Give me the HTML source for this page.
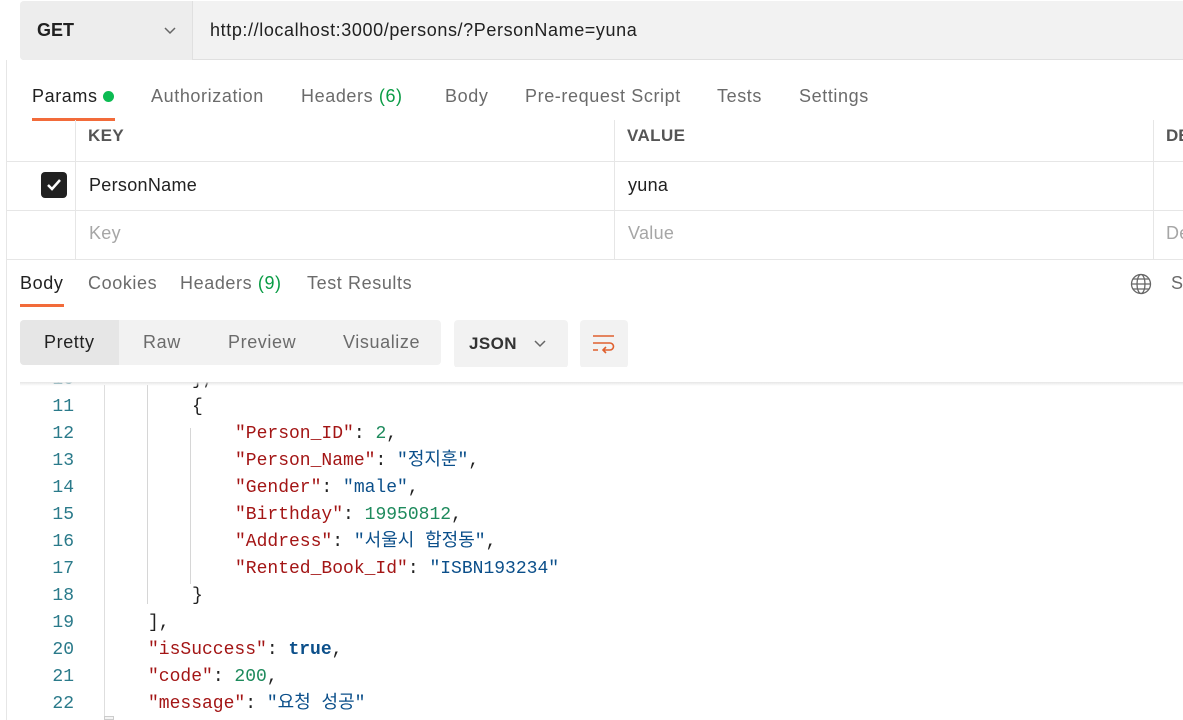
<!DOCTYPE html>
<html><head><meta charset="utf-8"><style>
*{margin:0;padding:0;box-sizing:border-box}
body{width:1183px;height:720px;overflow:hidden;background:#fff;font-family:"Liberation Sans","Noto Sans CJK KR",sans-serif;color:#212121;position:relative}
.a{position:absolute;white-space:nowrap}
.tab{font-size:18px;color:#6b6b6b;letter-spacing:.6px}
.t17{font-size:18px;letter-spacing:.3px}
.code{font-family:"Liberation Mono","Noto Sans CJK KR",monospace;font-size:18px;line-height:22px;height:22px}
.ln{position:absolute;left:20px;width:54px;text-align:right;color:#2a7a8a;font-family:"Liberation Mono",monospace;font-size:18px;line-height:22px}
.k{color:#a31515}.s{color:#0b4f8a}.n{color:#1d8a5c}.b{color:#0b4f8a;font-weight:bold}.p{color:#212121}
</style></head><body>
<div class="a" style="left:6px;top:60px;width:1px;height:660px;background:#e6e6e6"></div>
<div class="a" style="left:20px;top:1px;width:1163px;height:59px;background:#f2f2f2;border-bottom:1px solid #e0e0e0;border-radius:4px 0 0 4px"></div>
<div class="a" style="left:20px;top:1px;width:173px;height:59px;background:#ededed;border-right:1px solid #e0e0e0;border-radius:4px 0 0 4px"></div>
<div class="a" style="left:37px;top:20px;font-size:18px;font-weight:bold;color:#212121">GET</div>
<svg class="a" style="left:163px;top:26px" width="14" height="10" viewBox="0 0 14 10"><path d="M2 2l5 5 5-5" fill="none" stroke="#666" stroke-width="1.5"/></svg>
<div class="a" style="left:210px;top:20px;font-size:18px;letter-spacing:.6px;color:#212121">http://localhost:3000/persons/?PersonName=yuna</div>
<div class="a tab" style="left:32px;top:86px;color:#212121">Params</div>
<div class="a" style="left:103px;top:91px;width:11px;height:11px;border-radius:50%;background:#0cbb52"></div>
<div class="a" style="left:32px;top:118px;width:83px;height:3px;background:#f26b3a"></div>
<div class="a tab" style="left:151px;top:86px">Authorization</div>
<div class="a tab" style="left:301px;top:86px">Headers <span style="color:#0a9c45">(6)</span></div>
<div class="a tab" style="left:445px;top:86px">Body</div>
<div class="a tab" style="left:525px;top:86px">Pre-request Script</div>
<div class="a tab" style="left:717px;top:86px">Tests</div>
<div class="a tab" style="left:799px;top:86px">Settings</div>
<div class="a" style="left:7px;top:161px;width:1176px;height:1px;background:#e6e6e6"></div>
<div class="a" style="left:7px;top:210px;width:1176px;height:1px;background:#e6e6e6"></div>
<div class="a" style="left:7px;top:259px;width:1176px;height:1px;background:#e6e6e6"></div>
<div class="a" style="left:75px;top:120px;width:1px;height:139px;background:#e6e6e6"></div>
<div class="a" style="left:614px;top:120px;width:1px;height:139px;background:#e6e6e6"></div>
<div class="a" style="left:1153px;top:120px;width:1px;height:139px;background:#e6e6e6"></div>
<div class="a" style="left:88px;top:126px;font-size:17px;font-weight:bold;color:#555;letter-spacing:.4px">KEY</div>
<div class="a" style="left:627px;top:126px;font-size:17px;font-weight:bold;color:#555;letter-spacing:.4px">VALUE</div>
<div class="a" style="left:1166px;top:126px;font-size:17px;font-weight:bold;color:#555">DE</div>
<div class="a" style="left:41px;top:172px;width:26px;height:26px;border-radius:4px;background:#212121"></div>
<svg class="a" style="left:41px;top:172px" width="26" height="26" viewBox="0 0 26 26"><path d="M7 13l4 4 8-9" fill="none" stroke="#fff" stroke-width="2.5"/></svg>
<div class="a t17" style="left:89px;top:175px">PersonName</div>
<div class="a t17" style="left:628px;top:175px">yuna</div>
<div class="a t17" style="left:89px;top:223px;color:#a6a6a6">Key</div>
<div class="a t17" style="left:628px;top:223px;color:#a6a6a6">Value</div>
<div class="a t17" style="left:1166px;top:223px;color:#a6a6a6">De</div>
<div class="a tab" style="left:20px;top:273px;color:#212121">Body</div>
<div class="a" style="left:20px;top:304px;width:44px;height:3px;background:#f26b3a"></div>
<div class="a tab" style="left:88px;top:273px">Cookies</div>
<div class="a tab" style="left:180px;top:273px">Headers <span style="color:#0a9c45">(9)</span></div>
<div class="a tab" style="left:307px;top:273px">Test Results</div>
<svg class="a" style="left:1130px;top:273px" width="22" height="22" viewBox="0 0 22 22" fill="none" stroke="#666" stroke-width="1.3"><circle cx="11" cy="11" r="9.5"/><ellipse cx="11" cy="11" rx="4" ry="9.5"/><path d="M1.5 11h19M3 6h16M3 16h16"/></svg>
<div class="a tab" style="left:1171px;top:273px">S</div>
<div class="a" style="left:20px;top:320px;width:421px;height:45px;background:#f2f2f2;border-radius:4px"></div>
<div class="a" style="left:20px;top:320px;width:99px;height:45px;background:#e6e6e6;border-radius:4px 0 0 4px"></div>
<div class="a tab" style="left:44px;top:332px;color:#212121">Pretty</div>
<div class="a tab" style="left:143px;top:332px">Raw</div>
<div class="a tab" style="left:228px;top:332px">Preview</div>
<div class="a tab" style="left:343px;top:332px">Visualize</div>
<div class="a" style="left:454px;top:320px;width:114px;height:48px;background:#f2f2f2;border-radius:4px"></div>
<div class="a" style="left:469px;top:334px;font-size:17px;font-weight:bold;color:#333;letter-spacing:.4px">JSON</div>
<svg class="a" style="left:533px;top:339px" width="14" height="10" viewBox="0 0 14 10"><path d="M2 2l5 5 5-5" fill="none" stroke="#666" stroke-width="1.5"/></svg>
<div class="a" style="left:580px;top:320px;width:48px;height:48px;background:#f2f2f2;border-radius:4px"></div>
<svg class="a" style="left:592px;top:332px" width="24" height="24" viewBox="0 0 24 24" fill="none" stroke="#e0602e" stroke-width="1.6"><path d="M1 4h21M1 11h17a3.5 3.5 0 0 1 0 7h-6M14 15l-3 3 3 3M1 18h5"/></svg>
<div class="a" style="left:104px;top:385px;width:1px;height:335px;background:#dedede"></div>
<div class="a" style="left:147px;top:385px;width:1px;height:219px;background:#d6d6d6"></div>
<div class="a" style="left:190px;top:428px;width:1px;height:156px;background:#d6d6d6"></div>
<div class="a" style="left:104px;top:716px;width:10px;height:4px;border:1px solid #ccc;background:#f4f4f4"></div>
<div style="position:absolute;left:0;top:396px;width:100%">
<div class="ln" style="top:-27px">10</div><div class="a code p" style="left:192px;top:-27px">},</div>
<div class="ln" style="top:0">11</div><div class="a code p" style="left:192px;top:0">{</div>
<div class="ln" style="top:27px">12</div><div class="a code" style="left:235px;top:27px"><span class="k">"Person_ID"</span><span class="p">: </span><span class="n">2</span><span class="p">,</span></div>
<div class="ln" style="top:54px">13</div><div class="a code" style="left:235px;top:54px"><span class="k">"Person_Name"</span><span class="p">: </span><span class="s">"정지훈"</span><span class="p">,</span></div>
<div class="ln" style="top:81px">14</div><div class="a code" style="left:235px;top:81px"><span class="k">"Gender"</span><span class="p">: </span><span class="s">"male"</span><span class="p">,</span></div>
<div class="ln" style="top:108px">15</div><div class="a code" style="left:235px;top:108px"><span class="k">"Birthday"</span><span class="p">: </span><span class="n">19950812</span><span class="p">,</span></div>
<div class="ln" style="top:135px">16</div><div class="a code" style="left:235px;top:135px"><span class="k">"Address"</span><span class="p">: </span><span class="s">"서울시 합정동"</span><span class="p">,</span></div>
<div class="ln" style="top:162px">17</div><div class="a code" style="left:235px;top:162px"><span class="k">"Rented_Book_Id"</span><span class="p">: </span><span class="s">"ISBN193234"</span></div>
<div class="ln" style="top:189px">18</div><div class="a code p" style="left:192px;top:189px">}</div>
<div class="ln" style="top:216px">19</div><div class="a code p" style="left:148px;top:216px">],</div>
<div class="ln" style="top:243px">20</div><div class="a code" style="left:148px;top:243px"><span class="k">"isSuccess"</span><span class="p">: </span><span class="b">true</span><span class="p">,</span></div>
<div class="ln" style="top:270px">21</div><div class="a code" style="left:148px;top:270px"><span class="k">"code"</span><span class="p">: </span><span class="n">200</span><span class="p">,</span></div>
<div class="ln" style="top:297px">22</div><div class="a code" style="left:148px;top:297px"><span class="k">"message"</span><span class="p">: </span><span class="s">"요청 성공"</span></div>
</div>
<div class="a" style="left:20px;top:367px;width:1163px;height:15px;background:#fff"></div>
<div class="a" style="left:20px;top:382px;width:1163px;height:4px;background:linear-gradient(#e6e6e6,rgba(255,255,255,0))"></div>
</body></html>
